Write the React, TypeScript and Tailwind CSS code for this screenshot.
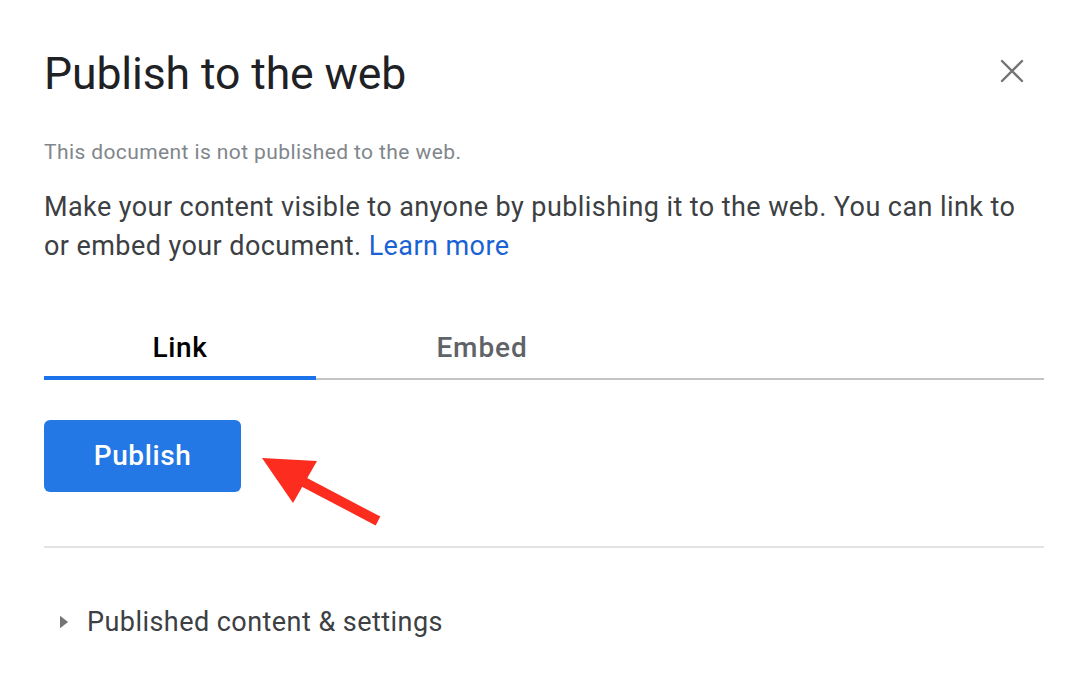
import { useState } from 'react'

const FONT = "font-['Roboto','Liberation_Sans',sans-serif]"

function CloseIcon() {
  return (
    <svg viewBox="0 0 24 24" className="size-[24px]" fill="none" stroke="#737373" strokeWidth="2.4" strokeLinecap="round">
      <path d="M2 2 L22 22 M22 2 L2 22" />
    </svg>
  )
}

function RedArrow() {
  // Annotation arrow pointing at the Publish button
  return (
    <svg viewBox="0 0 130 80" className="absolute left-[258px] top-[454px] h-[80px] w-[130px]">
      <polygon points="4,4 59,7 35,49" fill="#fc2c1f" />
      <line x1="42" y1="26" x2="120" y2="67" stroke="#fc2c1f" strokeWidth="10" />
    </svg>
  )
}

export default function App() {
  const [tab, setTab] = useState<'link' | 'embed'>('link')

  return (
    <div className={`relative h-[690px] w-[1090px] overflow-hidden bg-white ${FONT}`}>
      <div className="flex flex-col pr-[46px] pl-[44px]">
        {/* ---- Header ---- */}
        <header className="flex items-start justify-between pt-[48px]">
          <h1 className="text-[44.5px] leading-[52px] font-normal tracking-[-0.1px] text-[#202124]">
            Publish to the web
          </h1>
          <button className="mt-[11px] mr-[20px] flex items-center justify-center" aria-label="Close">
            <CloseIcon />
          </button>
        </header>

        <p className="mt-[40px] text-[21px] leading-[24px] tracking-[0.4px] text-[#80868b]">
          This document is not published to the web.
        </p>
        <p className="mt-[24px] text-[27px] leading-[39px] tracking-[0.42px] text-[#3c4043]">
          Make your content visible to anyone by publishing it to the web. You can link to
          or embed your document.{' '}
          <a className="text-[#1a62d3]" href="#">
            Learn more
          </a>
        </p>

        {/* ---- Tabs ---- */}
        <div className="mt-[64px] flex border-b-2 border-[#c4c4c4]">
          <button
            onClick={() => setTab('link')}
            className={`-mb-[2px] w-[272px] border-b-4 pb-[10px] text-[28px] leading-[36px] font-medium tracking-[0.6px] ${
              tab === 'link' ? 'border-[#1a73e8] text-black' : 'border-transparent text-[#5f6368]'
            }`}
          >
            Link
          </button>
          <button
            onClick={() => setTab('embed')}
            className={`-mb-[2px] w-[332px] border-b-4 pb-[10px] text-[28px] leading-[36px] font-medium tracking-[0.9px] ${
              tab === 'embed' ? 'border-[#1a73e8] text-black' : 'border-transparent text-[#5f6368]'
            }`}
          >
            Embed
          </button>
        </div>

        {/* ---- Publish ---- */}
        <div className="mt-[40px]">
          <button className="h-[72px] w-[197px] rounded-[6px] bg-[#2378e6] text-[28px] font-medium tracking-[0.6px] text-white">
            Publish
          </button>
        </div>

        <div className="mt-[54px] h-[2px] bg-[#e3e3e3]" />

        {/* ---- Settings disclosure ---- */}
        <button className="mt-[56px] flex items-center gap-[18px] pl-[16px] text-left">
          <svg viewBox="0 0 10 14" className="h-[14px] w-[9px]">
            <polygon points="0,0 9,7 0,14" fill="#757575" />
          </svg>
          <span className="text-[27px] leading-[36px] tracking-[0.45px] text-[#3c4043]">
            Published content &amp; settings
          </span>
        </button>
      </div>

      <RedArrow />
    </div>
  )
}
